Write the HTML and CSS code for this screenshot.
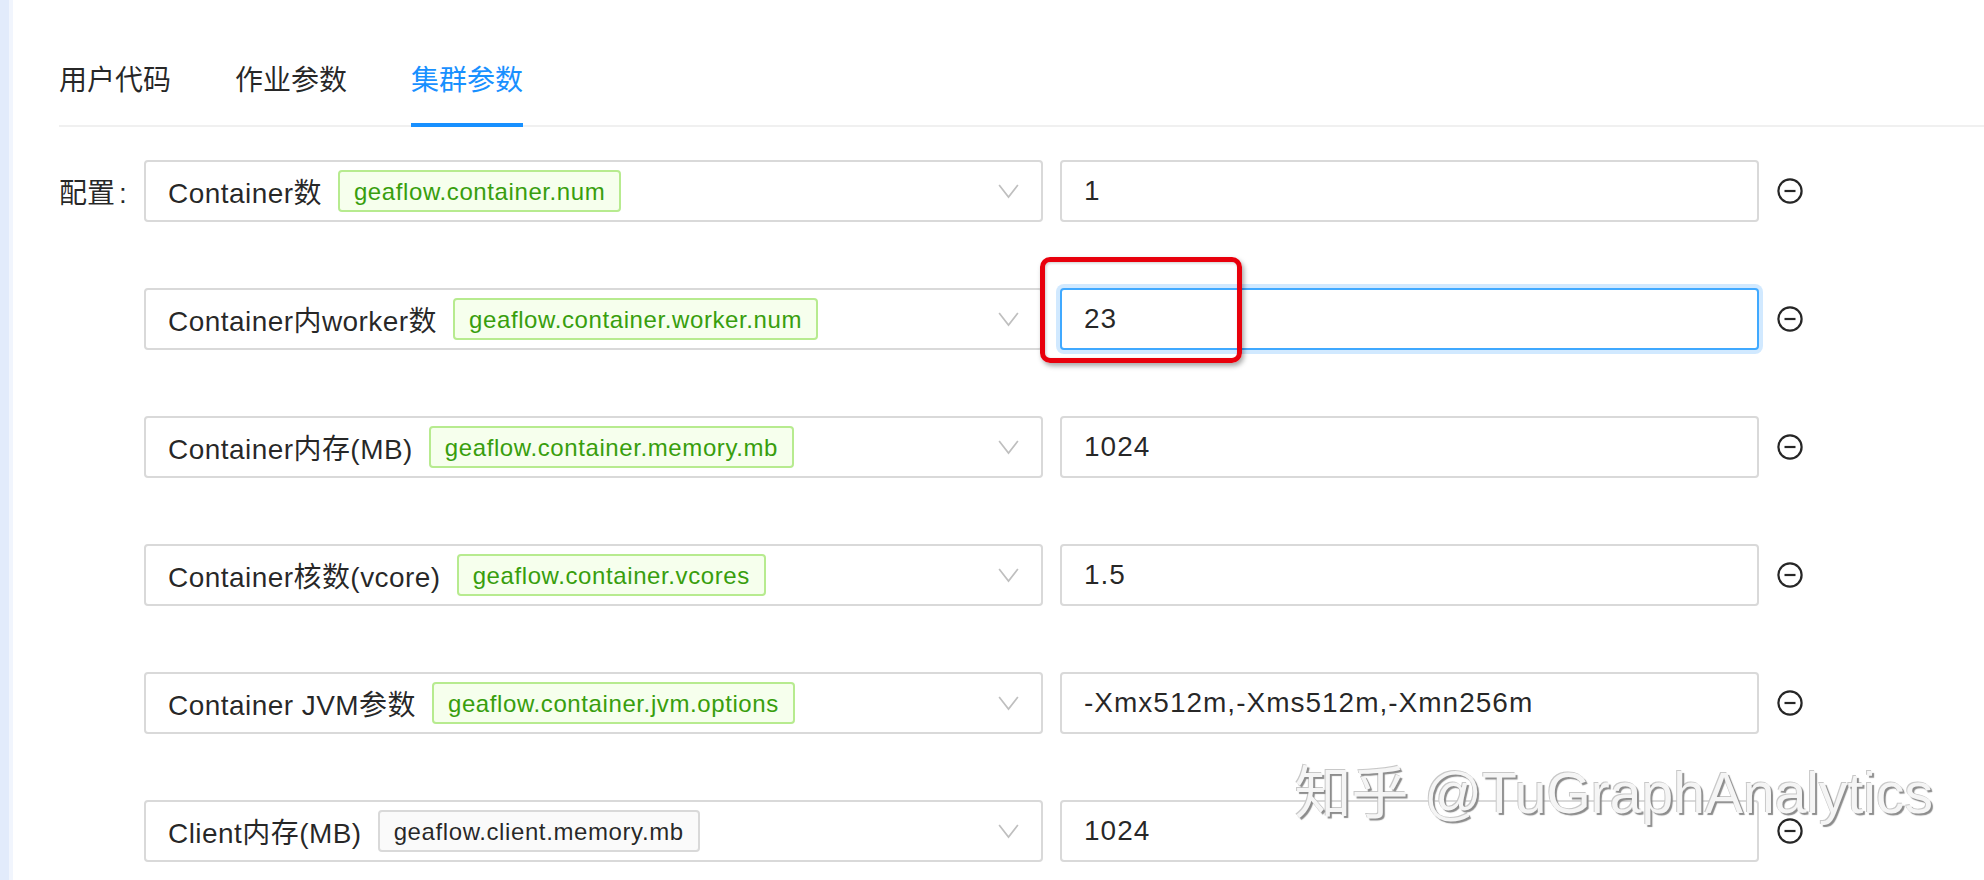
FILE: index.html
```html
<!DOCTYPE html>
<html lang="zh">
<head>
<meta charset="utf-8">
<title>集群参数</title>
<link rel="stylesheet" href="styles.css">
</head>
<body>
<div class="page">
  <div class="strip"><div class="strip-inner"></div></div>
  <main class="content">
    <nav class="tabs">
      <div class="tab">用户代码</div>
      <div class="tab">作业参数</div>
      <div class="tab active">集群参数</div>
    </nav>
    <div class="form">
      <div class="row">
        <div class="label">配置<span class="colon">:</span></div>
        <div class="select"><span class="sel-text">Container数</span><span class="tag">geaflow.container.num</span><svg class="arrow" viewBox="0 0 22 16"><polyline points="1,1 11,14 21,1"/></svg></div>
        <div class="cell"><div class="input">1</div></div>
        <svg class="minus" viewBox="0 0 26 26"><circle cx="13" cy="13" r="11.6"/><line x1="7.5" y1="13" x2="18.5" y2="13"/></svg>
      </div>
      <div class="row">
        <div class="label"></div>
        <div class="select"><span class="sel-text">Container内worker数</span><span class="tag">geaflow.container.worker.num</span><svg class="arrow" viewBox="0 0 22 16"><polyline points="1,1 11,14 21,1"/></svg></div>
        <div class="cell"><div class="input focused">23</div><div class="annot"></div></div>
        <svg class="minus" viewBox="0 0 26 26"><circle cx="13" cy="13" r="11.6"/><line x1="7.5" y1="13" x2="18.5" y2="13"/></svg>
      </div>
      <div class="row">
        <div class="label"></div>
        <div class="select"><span class="sel-text">Container内存(MB)</span><span class="tag">geaflow.container.memory.mb</span><svg class="arrow" viewBox="0 0 22 16"><polyline points="1,1 11,14 21,1"/></svg></div>
        <div class="cell"><div class="input">1024</div></div>
        <svg class="minus" viewBox="0 0 26 26"><circle cx="13" cy="13" r="11.6"/><line x1="7.5" y1="13" x2="18.5" y2="13"/></svg>
      </div>
      <div class="row">
        <div class="label"></div>
        <div class="select"><span class="sel-text">Container核数(vcore)</span><span class="tag">geaflow.container.vcores</span><svg class="arrow" viewBox="0 0 22 16"><polyline points="1,1 11,14 21,1"/></svg></div>
        <div class="cell"><div class="input">1.5</div></div>
        <svg class="minus" viewBox="0 0 26 26"><circle cx="13" cy="13" r="11.6"/><line x1="7.5" y1="13" x2="18.5" y2="13"/></svg>
      </div>
      <div class="row">
        <div class="label"></div>
        <div class="select"><span class="sel-text">Container JVM参数</span><span class="tag">geaflow.container.jvm.options</span><svg class="arrow" viewBox="0 0 22 16"><polyline points="1,1 11,14 21,1"/></svg></div>
        <div class="cell"><div class="input">-Xmx512m,-Xms512m,-Xmn256m</div></div>
        <svg class="minus" viewBox="0 0 26 26"><circle cx="13" cy="13" r="11.6"/><line x1="7.5" y1="13" x2="18.5" y2="13"/></svg>
      </div>
      <div class="row">
        <div class="label"></div>
        <div class="select"><span class="sel-text">Client内存(MB)</span><span class="tag gray">geaflow.client.memory.mb</span><svg class="arrow" viewBox="0 0 22 16"><polyline points="1,1 11,14 21,1"/></svg></div>
        <div class="cell"><div class="input">1024</div></div>
        <svg class="minus" viewBox="0 0 26 26"><circle cx="13" cy="13" r="11.6"/><line x1="7.5" y1="13" x2="18.5" y2="13"/></svg>
      </div>
    </div>
  </main>
  <div class="watermark">知乎 @TuGraphAnalytics</div>
</div>
</body>
</html>
```
FILE: styles.css
```css
* { box-sizing: border-box; }
html, body {
  margin: 0;
  padding: 0;
  background: #fff;
  width: 1984px;
  height: 880px;
  overflow: hidden;
}
body {
  font-family: "Liberation Sans", "Noto Sans CJK SC", sans-serif;
  color: rgba(0, 0, 0, 0.85);
}
.page {
  position: relative;
  display: flex;
  width: 1984px;
  height: 880px;
}
.strip {
  flex: none;
  width: 13px;
  background: #f1f5fd;
}
.strip-inner {
  width: 9px;
  height: 100%;
  background: #e2ebfb;
}
.content {
  flex: 1;
  padding-left: 46px;
}
.tabs {
  display: flex;
  align-items: flex-end;
  padding-top: 35px;
  border-bottom: 2px solid #f0f0f0;
}
.tab {
  font-size: 28px;
  line-height: 44px;
  padding: 24px 0 20px;
  border-bottom: 4px solid transparent;
  margin-bottom: -2px;
  color: rgba(0, 0, 0, 0.85);
}
.tab + .tab { margin-left: 64px; }
.tab.active {
  color: #1890ff;
  border-bottom-color: #1890ff;
}
.form {
  margin-top: 33px;
}
.row {
  display: flex;
  align-items: center;
  height: 62px;
  margin-bottom: 66px;
}
.label {
  flex: none;
  width: 85px;
  font-size: 28px;
  color: rgba(0, 0, 0, 0.85);
}
.colon { margin-left: 4px; }
.select {
  flex: none;
  width: 899px;
  height: 62px;
  border: 2px solid #d9d9d9;
  border-radius: 4px;
  padding: 0 22px;
  display: flex;
  align-items: center;
  font-size: 28px;
}
.sel-text { white-space: nowrap; letter-spacing: 0.45px; }
.tag {
  margin-left: 16px;
  height: 42px;
  line-height: 39px;
  padding: 0 14px;
  font-size: 24px;
  letter-spacing: 0.6px;
  color: #389e0d;
  background: #f6ffed;
  border: 2px solid #b7eb8f;
  border-radius: 4px;
  white-space: nowrap;
}
.tag.gray {
  color: rgba(0, 0, 0, 0.85);
  background: #fafafa;
  border-color: #d9d9d9;
}
.arrow {
  margin-left: auto;
  width: 21px;
  height: 15px;
  fill: none;
  stroke: #bfbfbf;
  stroke-width: 1.8;
}
.cell {
  flex: none;
  position: relative;
  margin-left: 17px;
}
.input {
  width: 699px;
  height: 62px;
  border: 2px solid #d9d9d9;
  border-radius: 4px;
  padding: 0 22px;
  display: flex;
  align-items: center;
  font-size: 28px;
  letter-spacing: 1px;
  color: rgba(0, 0, 0, 0.85);
  background: #fff;
}
.input.focused {
  border-color: #40a9ff;
  box-shadow: 0 0 0 4px rgba(24, 144, 255, 0.2);
}
.annot {
  position: absolute;
  left: -20px;
  top: -31px;
  width: 202px;
  height: 106px;
  border: 5px solid #e8000c;
  border-radius: 10px;
  box-shadow: 2px 3px 5px rgba(0, 0, 0, 0.35), inset 1px 1px 3px rgba(0, 0, 0, 0.2);
}
.minus {
  flex: none;
  margin-left: 18px;
  width: 26px;
  height: 26px;
  fill: none;
  stroke: rgba(0, 0, 0, 0.85);
  stroke-width: 2.2;
}
.watermark {
  position: absolute;
  right: 51px;
  top: 763px;
  font-size: 57px;
  line-height: 60px;
  white-space: nowrap;
  color: #f5f5f5;
  text-shadow: 2px 2px 1px #8c8c8c, -1px -1px 0 #c8c8c8;
  font-family: "Liberation Sans", "Noto Sans CJK SC", sans-serif;
}
```
